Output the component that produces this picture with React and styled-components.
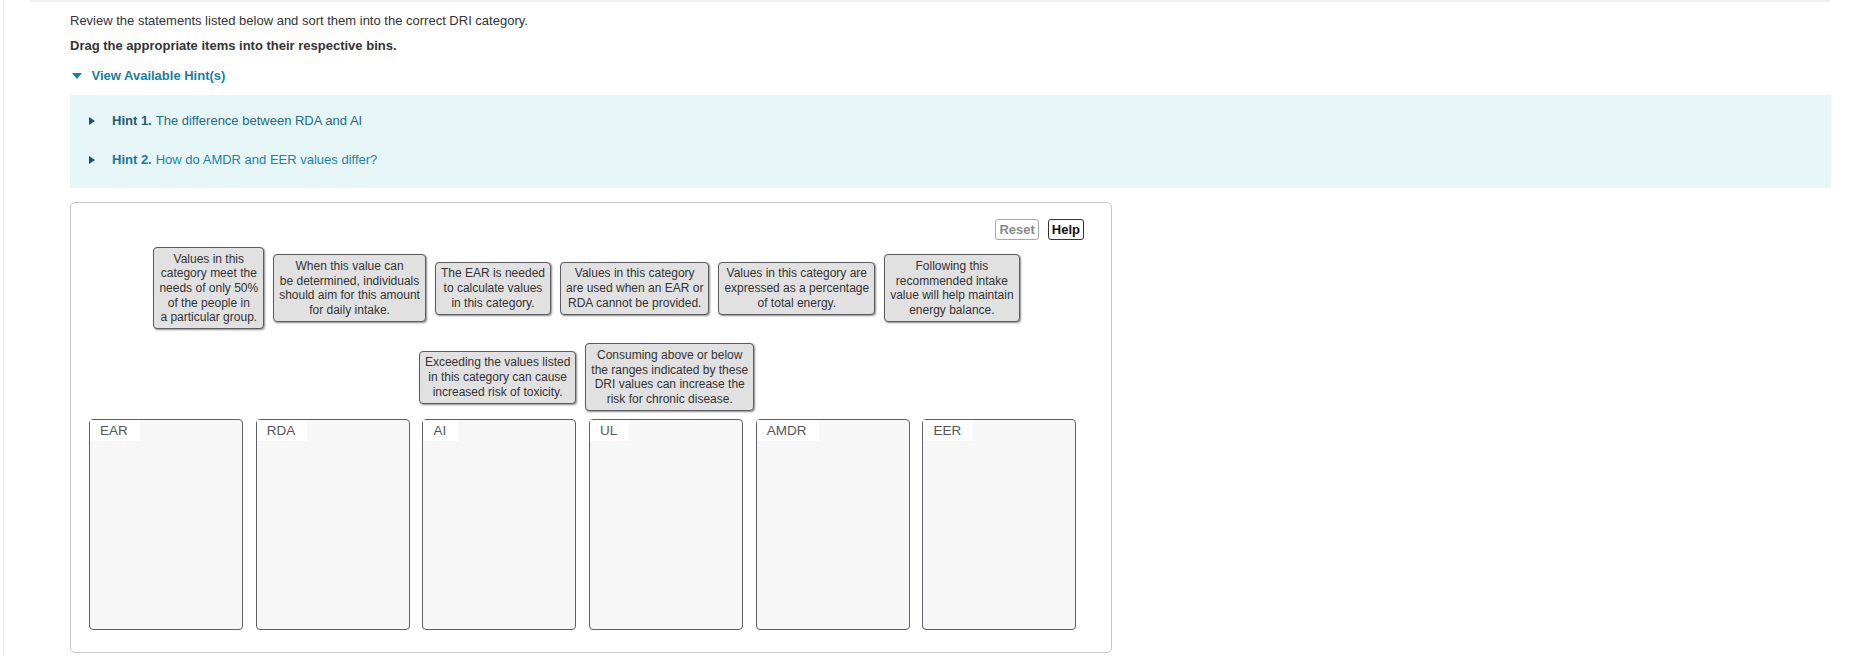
import React from 'react';
import styled, { createGlobalStyle } from 'styled-components';

const GlobalStyle = createGlobalStyle`
html, body {
    margin : 0;
    padding : 0;
    background : #fff;
}
body {
    font-family : "Liberation Sans", Arial, sans-serif;
    color : #333;
}
`;

const Page = styled.div`
margin-left : 3px;
border-left : 1px solid #ececec;
height : 656px;
overflow : hidden;
`;

const TopStrip = styled.div`
margin-left : 26px;
width : 1801px;
height : 2px;
background : #f2f2f2;
`;

const Column = styled.div`
margin-left : 66px;
width : 1761px;
padding-top : 11px;
`;

const Prompt = styled.p`
margin : 0 0 ${props => props.gap || 9}px;
font-size : 13px;
line-height : 16px;
font-weight : ${props => props.bold ? 700 : 400};
color : #333;
`;

const HintToggle = styled.div`
display : flex;
align-items : center;
gap : 10px;
padding-left : 1.5px;
margin-bottom : 11px;
font-size : 13px;
line-height : 16px;
font-weight : 700;
color : #17809f;
`;

const HintBand = styled.div`
background : #e6f5f6;
padding : 18px 0 20px 19px;
display : flex;
flex-direction : column;
gap : 23px;
`;

const HintRow = styled.div`
display : flex;
align-items : center;
font-size : 13px;
line-height : 16px;
color : ${props => props.visited ? "#246b84" : "#1a84a8"};
b {
    color : ${props => props.visited ? "#1c5d74" : "#17799b"};
    margin-right : 4px;
}
svg {
    margin-right : 17px;
}
`;

const Panel = styled.div`
margin-top : 14px;
width : 1042px;
box-sizing : border-box;
border : 1px solid #c9c9c9;
border-radius : 5px;
padding : 16px 27px 22px 18px;
`;

const ButtonBar = styled.div`
display : flex;
justify-content : flex-end;
gap : 9px;
`;

const Button = styled.button`
font-family : "Liberation Sans", Arial, sans-serif;
font-size : 13px;
font-weight : 700;
line-height : 19px;
padding : 0 3px;
background : #fff;
border : 1px solid ${props => props.disabled ? "#a8a8a8" : "#333"};
color : ${props => props.disabled ? "#8a8a8a" : "#111"};
border-radius : 3px;
cursor : pointer;
`;

const CardRow = styled.div`
display : flex;
justify-content : center;
align-items : center;
`;

const Card = styled.div`
margin : 7px 4.5px;
padding : 3.5px 5px;
border : 1.5px solid #5a5a5f;
border-radius : 4px;
background : #e1e1e1;
box-shadow : 1px 1px 2px rgba(0, 0, 0, 0.45);
font-size : 12px;
line-height : 14.67px;
text-align : center;
white-space : nowrap;
color : #333;
cursor : move;
`;

const Bins = styled.div`
display : flex;
gap : 12.7px;
margin-top : 1px;
`;

const Bin = styled.div`
width : 154px;
height : 211px;
box-sizing : border-box;
border : 1.5px solid #5f5d6a;
border-radius : 4px;
background : #f7f7f7;
`;

const BinLabel = styled.span`
display : inline-block;
background : #fff;
padding : 0 12px 0 10px;
font-size : 13.5px;
line-height : 21px;
color : #555;
`;

const DownArrow = () => (
    <svg width="10" height="6" viewBox="0 0 10 6">
        <polygon points="0,0 10,0 5,6" fill="#17809f" />
    </svg>
);

const RightArrow = () => (
    <svg width="6" height="8" viewBox="0 0 6 8">
        <polygon points="0,0 6,4 0,8" fill="#1d4f63" />
    </svg>
);

const ROW_ONE = [
    ["Values in this", "category meet the", "needs of only 50%", "of the people in", "a particular group."],
    ["When this value can", "be determined, individuals", "should aim for this amount", "for daily intake."],
    ["The EAR is needed", "to calculate values", "in this category."],
    ["Values in this category", "are used when an EAR or", "RDA cannot be provided."],
    ["Values in this category are", "expressed as a percentage", "of total energy."],
    ["Following this", "recommended intake", "value will help maintain", "energy balance."],
];

const ROW_TWO = [
    ["Exceeding the values listed", "in this category can cause", "increased risk of toxicity."],
    ["Consuming above or below", "the ranges indicated by these", "DRI values can increase the", "risk for chronic disease."],
];

const BINS = ["EAR", "RDA", "AI", "UL", "AMDR", "EER"];

const renderCard = (lines, i) => (
    <Card key={i}>
        {lines.map((line, j) => <React.Fragment key={j}>{j > 0 && <br />}{line}</React.Fragment>)}
    </Card>
);

export default function App() {
    return <>
        <GlobalStyle />
        <Page>
            <TopStrip />
            <Column>
                <Prompt>Review the statements listed below and sort them into the correct DRI category.</Prompt>
                <Prompt bold gap={14}>Drag the appropriate items into their respective bins.</Prompt>
                <HintToggle>
                    <DownArrow />
                    View Available Hint(s)
                </HintToggle>
                <HintBand>
                    <HintRow visited>
                        <RightArrow />
                        <b>Hint 1.</b> The difference between RDA and AI
                    </HintRow>
                    <HintRow>
                        <RightArrow />
                        <b>Hint 2.</b> How do AMDR and EER values differ?
                    </HintRow>
                </HintBand>
                <Panel>
                    <ButtonBar>
                        <Button disabled>Reset</Button>
                        <Button>Help</Button>
                    </ButtonBar>
                    <CardRow>{ROW_ONE.map(renderCard)}</CardRow>
                    <CardRow>{ROW_TWO.map(renderCard)}</CardRow>
                    <Bins>
                        {BINS.map(name => (
                            <Bin key={name}>
                                <BinLabel>{name}</BinLabel>
                            </Bin>
                        ))}
                    </Bins>
                </Panel>
            </Column>
        </Page>
    </>;
}
